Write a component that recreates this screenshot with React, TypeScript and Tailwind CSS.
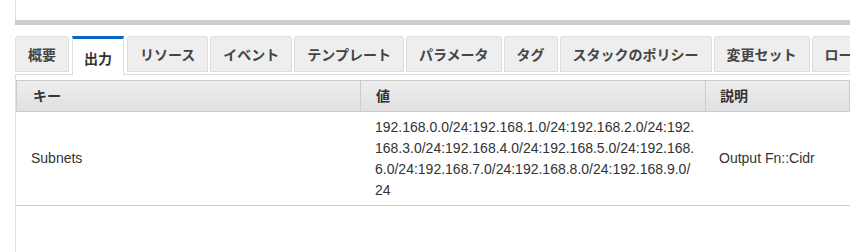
import React from 'react';

const tabs = [
  '概要',
  '出力',
  'リソース',
  'イベント',
  'テンプレート',
  'パラメータ',
  'タグ',
  'スタックのポリシー',
  '変更セット',
  'ロールバックトリガー',
];

const outputs = [
  {
    key: 'Subnets',
    value:
      '192.168.0.0/24:192.168.1.0/24:192.168.2.0/24:192.168.3.0/24:192.168.4.0/24:192.168.5.0/24:192.168.6.0/24:192.168.7.0/24:192.168.8.0/24:192.168.9.0/24',
    description: 'Output Fn::Cidr',
  },
];

export default function App() {
  const active = '出力';

  return (
    <div
      className="h-[252px] overflow-hidden bg-white pl-[15px] text-[14px] text-[#333]"
      style={{ fontFamily: '"Liberation Sans", "Noto Sans CJK JP", sans-serif' }}
    >
      {/* stack detail panel above */}
      <div className="h-[20px] border-l border-[#ddd]" />
      <div className="h-[5px] bg-[#ccc]" />

      {/* tabs */}
      <div className="mt-[11px] flex h-[38px] items-start gap-[2px] whitespace-nowrap leading-none">
        {tabs.map(tab =>
          tab === active ? (
            <div
              key={tab}
              className="relative z-10 mx-px flex h-[39px] shrink-0 items-center justify-center border-x border-t-[3px] border-x-[#ddd] border-t-[#0a66c6] bg-white px-[11px] pt-[4px] font-bold text-[#333]"
            >
              {tab}
            </div>
          ) : (
            <div
              key={tab}
              className="flex h-[36px] shrink-0 items-center justify-center rounded-t-[3px] border border-[#ddd] bg-[#eeeeee] px-[12px] pt-px font-bold text-[#444]"
            >
              {tab}
            </div>
          )
        )}
      </div>

      {/* outputs table */}
      <div className="h-full border-l border-t border-[#ddd] pt-[5px]">
        <div className="grid h-[32px] grid-cols-[344px_345px_1fr] border border-[#ccc] bg-linear-to-b from-[#eeeeee] to-[#e0e0e0] font-bold">
          <div className="flex items-center border-r border-[#ccc] pl-[16px]">キー</div>
          <div className="flex items-center border-r border-[#ccc] pl-[15px]">値</div>
          <div className="flex items-center pl-[14px]">説明</div>
        </div>

        {outputs.map(row => (
          <div
            key={row.key}
            className="grid grid-cols-[344px_345px_1fr] border-b border-[#ccc] pl-px"
          >
            <div className="flex items-center pl-[14px]">{row.key}</div>
            <div className="pt-[5px] pb-[4px] pl-[14px]">
              <div className="w-[321px] break-all leading-[21px]">{row.value}</div>
            </div>
            <div className="flex items-center pl-[13px]">{row.description}</div>
          </div>
        ))}
      </div>
    </div>
  );
}
